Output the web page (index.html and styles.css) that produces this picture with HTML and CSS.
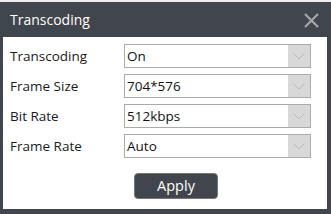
FILE: index.html
```html
<!DOCTYPE html>
<html>
<head>
<meta charset="utf-8">
<link rel="stylesheet" href="styles.css">
</head>
<body>
<div class="dialog">
  <div class="titlebar">
    <span class="title">Transcoding</span>
    <svg class="close" width="15" height="15" viewBox="0 0 15 15"><path d="M1 1 L14 14 M14 1 L1 14" stroke="#a3a6aa" stroke-width="2.2" stroke-linecap="butt"/></svg>
  </div>
  <div class="content">
    <div class="row">
      <span class="label">Transcoding</span>
      <div class="select"><span class="value">On</span><span class="arrow"><svg width="12" height="7" viewBox="0 0 12 7"><path d="M0.5 0.5 L6 6 L11.5 0.5" fill="none" stroke="#b9b9b9" stroke-width="1"/></svg></span></div>
    </div>
    <div class="row">
      <span class="label">Frame Size</span>
      <div class="select"><span class="value">704*576</span><span class="arrow"><svg width="12" height="7" viewBox="0 0 12 7"><path d="M0.5 0.5 L6 6 L11.5 0.5" fill="none" stroke="#b9b9b9" stroke-width="1"/></svg></span></div>
    </div>
    <div class="row">
      <span class="label">Bit Rate</span>
      <div class="select"><span class="value">512kbps</span><span class="arrow"><svg width="12" height="7" viewBox="0 0 12 7"><path d="M0.5 0.5 L6 6 L11.5 0.5" fill="none" stroke="#b9b9b9" stroke-width="1"/></svg></span></div>
    </div>
    <div class="row">
      <span class="label">Frame Rate</span>
      <div class="select"><span class="value">Auto</span><span class="arrow"><svg width="12" height="7" viewBox="0 0 12 7"><path d="M0.5 0.5 L6 6 L11.5 0.5" fill="none" stroke="#b9b9b9" stroke-width="1"/></svg></span></div>
    </div>
    <div class="actions">
      <button class="apply">Apply</button>
    </div>
  </div>
</div>
</body>
</html>
```
FILE: styles.css
```css
html, body {
  margin: 0;
  padding: 0;
  background: #eeeeee;
}
body {
  width: 331px;
  height: 214px;
  overflow: hidden;
  font-family: "Open Sans", "Noto Sans", sans-serif;
}
.dialog {
  margin-top: 2px;
  width: 331px;
  height: 212px;
  background: #41454d;
  box-sizing: border-box;
  padding: 0 4px 5px 3px;
  display: flex;
  flex-direction: column;
}
.titlebar {
  height: 35px;
  display: flex;
  align-items: center;
  justify-content: space-between;
  padding: 0 8px 0 7px;
  flex: none;
}
.title {
  color: #ffffff;
  font-size: 14px;
  margin-top: -1px;
}
.close {
  display: block;
  margin-top: 1px;
}
.content {
  flex: 1;
  background: #ffffff;
  padding: 7px 0 0 7px;
  display: flex;
  flex-direction: column;
  gap: 6px;
}
.row {
  display: flex;
  align-items: center;
  height: 24px;
}
.label {
  width: 114px;
  font-size: 13.5px;
  color: #1a1a1a;
}
.select {
  width: 187px;
  height: 24px;
  box-sizing: border-box;
  border: 1px solid #ababab;
  display: flex;
  align-items: stretch;
}
.value {
  flex: 1;
  font-size: 13.5px;
  color: #111111;
  padding-left: 2px;
  line-height: 22px;
}
.arrow {
  width: 22px;
  background: #d8d8d8;
  display: flex;
  align-items: center;
  justify-content: center;
}
.arrow svg {
  display: block;
}
.actions {
  margin-top: 9px;
  padding-left: 124px;
}
.apply {
  width: 84px;
  height: 26px;
  background: #41454d;
  border: 1px solid #74777c;
  border-radius: 4px;
  color: #ffffff;
  font-family: "Open Sans", "Noto Sans", sans-serif;
  font-size: 14.5px;
  padding: 0;
  line-height: 22px;
}
```
